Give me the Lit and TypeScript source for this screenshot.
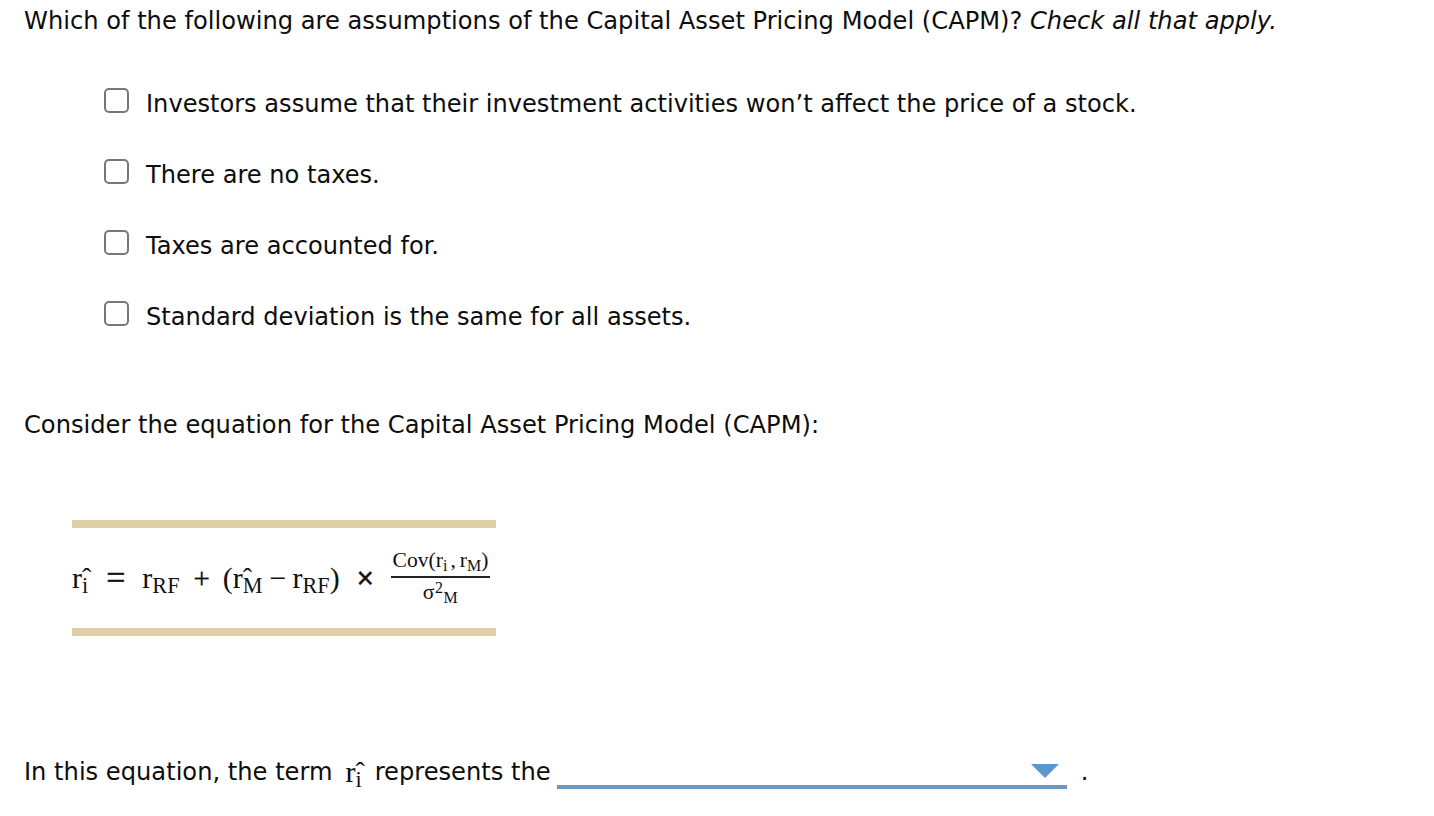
import { LitElement, html, css } from "lit";
import { customElement } from "lit/decorators.js";

const options = [
  "Investors assume that their investment activities won’t affect the price of a stock.",
  "There are no taxes.",
  "Taxes are accounted for.",
  "Standard deviation is the same for all assets.",
];

@customElement("app-root")
export class AppRoot extends LitElement {
  static styles = css`
    :host {
      display: block;
      width: 1434px;
      height: 816px;
      overflow: hidden;
      background: #fff;
      color: #0d0d0d;
      font-family: "DejaVu Sans", Verdana, sans-serif;
      font-size: 24.16px;
      line-height: 30px;
      padding: 6px 0 0 24px;
      box-sizing: border-box;
    }
    p { margin: 0; }
    .options {
      list-style: none;
      margin: 52px 0 0 80px;
      padding: 0;
      display: flex;
      flex-direction: column;
      gap: 41px;
      font-size: 24.1px;
    }
    .options li { display: flex; align-items: center; gap: 17px; height: 30px; }
    .options li span:last-child { position: relative; top: 1px; }
    .box {
      width: 25px;
      height: 25px;
      box-sizing: border-box;
      border: 2.5px solid #777;
      border-radius: 5px;
      background: #fff;
      flex: none;
      position: relative;
      top: -3px;
    }
    .consider { margin-top: 79px; }
    .equation {
      width: 424px;
      height: 116px;
      margin: 80px 0 0 48px;
      border-top: 8px solid #dccfa6;
      border-bottom: 8px solid #dccfa6;
      box-sizing: border-box;
      display: flex;
      align-items: center;
      white-space: nowrap;
      font-family: "Liberation Serif", "Times New Roman", serif;
      font-size: 30px;
      line-height: 30px;
      color: #111;
    }
    sub, sup { line-height: 0; }
    sub { font-size: 0.74em; vertical-align: -0.24em; }
    sup { font-size: 0.74em; vertical-align: 0.36em; }
    .hat { position: relative; display: inline-block; }
    .hat::after {
      content: "ˆ";
      position: absolute;
      left: 10px;
      top: 0;
      font-size: 28px;
    }
    .eq { font-size: 34px; margin: 0 17px 0 18px; -webkit-text-stroke: 0.4px #111; }
    .plus { font-size: 29px; margin: 0 13px 0 14px; -webkit-text-stroke: 0.4px #111; }
    .times { font-family: "Liberation Sans", Arial, sans-serif; font-size: 29px; margin: 0 17px; -webkit-text-stroke: 0.5px #111; }
    .minus { margin: 0 6px 0 7px; }
    .fraction {
      display: flex;
      flex-direction: column;
      align-items: center;
      font-size: 21.6px;
      line-height: 26px;
      margin-bottom: 4px;
    }
    .num { border-bottom: 2px solid #222; padding: 0 2px 3px; }
    .den { padding-top: 1px; letter-spacing: 0.6px; }
    .comma { margin: 0 4px 0 3px; }
    .last { margin-top: 119px; display: flex; align-items: center; white-space: pre; }
    .inline-r {
      font-family: "Liberation Serif", "Times New Roman", serif;
      font-size: 30px;
      margin: 0 13px 0 13px;
    }
    .select {
      width: 510px;
      height: 30px;
      margin: 0 14px 0 6px;
      border-bottom: 4px solid #6a97c4;
      position: relative;
    }
    .select svg { position: absolute; right: 8px; top: 9px; }
  `;

  render() {
    return html`
      <p>Which of the following are assumptions of the Capital Asset Pricing Model (CAPM)? <em>Check all that apply.</em></p>
      <ul class="options">
        ${options.map((o) => html`<li><span class="box"></span><span>${o}</span></li>`)}
      </ul>
      <p class="consider">Consider the equation for the Capital Asset Pricing Model (CAPM):</p>
      <div class="equation">
        <span class="hat">r<sub>i</sub></span>
        <span class="eq">=</span>
        <span>r<sub>RF</sub></span>
        <span class="plus">+</span>
        <span>(<span class="hat">r<sub>M</sub></span><span class="minus">−</span>r<sub>RF</sub>)</span>
        <span class="times">×</span>
        <span class="fraction">
          <span class="num">Cov(r<sub>i</sub><span class="comma">,</span>r<sub>M</sub>)</span>
          <span class="den">σ<sup>2</sup><sub>M</sub></span>
        </span>
      </div>
      <div class="last">
        <span>In this equation, the term</span>
        <span class="inline-r hat">r<sub>i</sub></span>
        <span>represents the</span>
        <span class="select">
          <svg width="28" height="14" viewBox="0 0 28 14"><path d="M0 0H28L14 14Z" fill="#5b96cf"/></svg>
        </span>
        <span>.</span>
      </div>
    `;
  }
}
